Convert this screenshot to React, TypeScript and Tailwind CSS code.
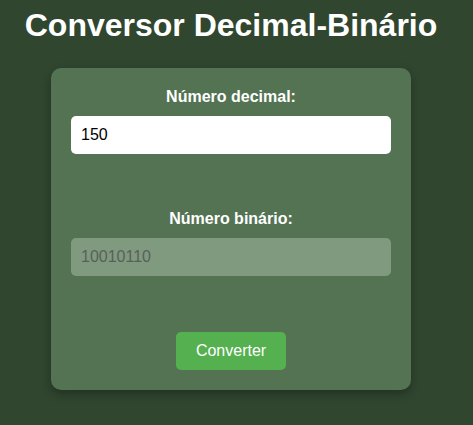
import React from "react";

export default function App() {
  return (
    <div
      className="min-h-[425px] w-full bg-[#30462f] pr-[11px] pt-[7px]"
      style={{ fontFamily: '"Liberation Sans", Arial, sans-serif' }}
    >
      <h1 className="text-center text-[32px] font-bold leading-[1.15] text-white">
        Conversor Decimal-Binário
      </h1>
      <div className="mx-auto mt-[24px] flex w-[360px] flex-col rounded-[10px] bg-[#537353] px-[20px] pb-[20px] pt-[20px] shadow-[0_4px_10px_rgba(0,0,0,0.3)]">
        <label className="block text-center text-[16px] font-bold leading-[18px] text-white">
          Número decimal:
        </label>
        <input
          className="mt-[10px] h-[38px] w-full rounded-[5px] bg-white px-[10px] text-[16px] text-black outline-none"
          defaultValue="150"
        />
        <label className="mt-[56px] block text-center text-[16px] font-bold leading-[18px] text-white">
          Número binário:
        </label>
        <input
          disabled
          className="mt-[10px] h-[38px] w-full rounded-[5px] bg-[#809a80] px-[10px] text-[16px] text-[#596059] outline-none"
          defaultValue="10010110"
        />
        <button className="mx-auto mt-[56px] h-[38px] w-[110px] rounded-[5px] bg-[#55b04f] text-[16px] text-white">
          Converter
        </button>
      </div>
    </div>
  );
}
